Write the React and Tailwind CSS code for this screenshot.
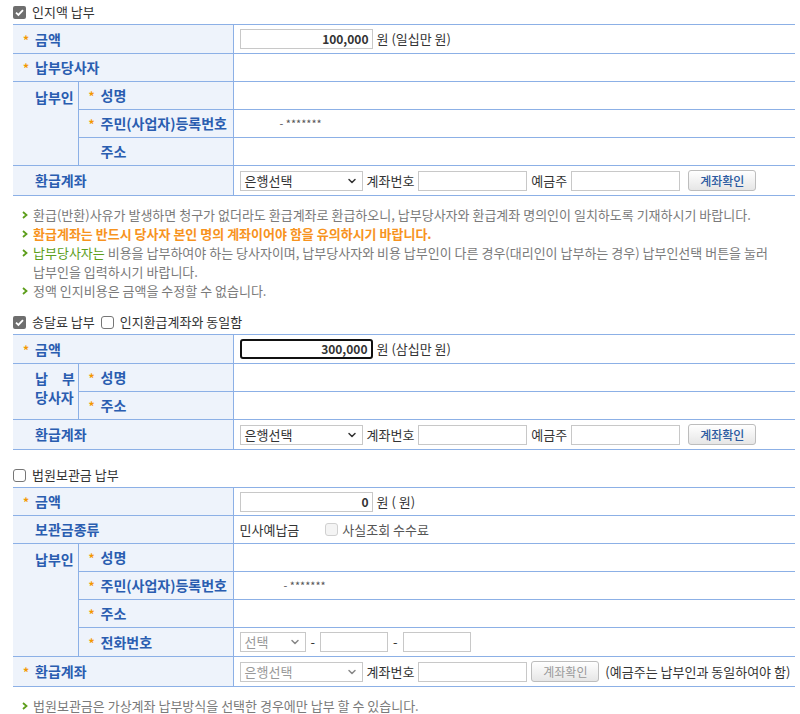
import React from "react";
import { ChevronDown } from "lucide-react";

const Star = () => <span className="inline-block w-[12px] text-[12px] text-[#f39800] font-bold">*</span>;
const NoStar = () => <span className="inline-block w-[12px]" />;

function CheckBox({ checked, disabled }) {
  if (checked) {
    return (
      <span className="inline-flex w-[13px] h-[13px] rounded-[2px] bg-[#6e6e6e] items-center justify-center">
        <svg viewBox="0 0 12 12" className="w-[11px] h-[11px]">
          <path d="M2.2 6.2 L4.8 8.7 L9.8 3.3" fill="none" stroke="white" strokeWidth="2" />
        </svg>
      </span>
    );
  }
  return (
    <span
      className={
        "inline-block w-[13px] h-[13px] rounded-[3px] border " +
        (disabled ? "border-[#d0d0d0] bg-[#f4f4f4]" : "border-[#767676] bg-white")
      }
    />
  );
}

function Header({ children }) {
  return <div className="h-[24px] flex items-center gap-[6px] text-[13px] text-[#333]">{children}</div>;
}

function LabelCell({ star, children, colSpan, rowSpan, sub, top }) {
  return (
    <td
      colSpan={colSpan}
      rowSpan={rowSpan}
      className={
        "bg-[#eef3fb] border-b border-[#8cb0e6] text-[14px] font-bold text-[#2a5db0] whitespace-nowrap " +
        (sub ? "pl-[10px] border-l " : "pl-[10px] ") +
        (top ? "align-top pt-[5px]" : "align-middle")
      }
    >
      {star ? <Star /> : <NoStar />}
      {children}
    </td>
  );
}

function ValueCell({ children }) {
  return (
    <td className="border-b border-l border-[#8cb0e6] pl-[6px] text-[13px] text-[#333] align-middle">
      <div className="flex items-center gap-[4px]">{children}</div>
    </td>
  );
}

function TextInput({ w, value, focused, bold }) {
  return (
    <div
      className={
        "h-[20px] flex items-center justify-end pr-[3px] bg-white text-[12px] " +
        (focused ? "border-2 border-[#111] rounded-[3px] " : "border border-[#c8c8c8] ") +
        (bold ? "font-bold text-[#333]" : "text-[#333]")
      }
      style={{ width: w }}
    >
      {value}
    </div>
  );
}

function Select({ w, label, disabled }) {
  return (
    <div
      className={
        "h-[20px] flex items-center justify-between px-[4px] border border-[#c8c8c8] bg-white text-[13px] " +
        (disabled ? "text-[#999]" : "text-[#333]")
      }
      style={{ width: w }}
    >
      <span>{label}</span>
      <ChevronDown size={12} strokeWidth={3} className={disabled ? "text-[#888]" : "text-[#333]"} />
    </div>
  );
}

function Btn({ disabled }) {
  return (
    <div
      className={
        "h-[21px] w-[68px] flex items-center justify-center rounded-[3px] border border-[#bdbdbd] bg-gradient-to-b from-white to-[#e6e6e6] text-[12px] " +
        (disabled ? "text-[#999]" : "text-[#2a5aa0] font-medium")
      }
    >
      계좌확인
    </div>
  );
}

function BankRow({ full }) {
  return (
    <>
      <Select w={123} label="은행선택" disabled={!full} />
      <span>계좌번호</span>
      <TextInput w={109} />
      {full ? (
        <>
          <span>예금주</span>
          <TextInput w={109} />
          <span className="ml-[4px]">
            <Btn />
          </span>
        </>
      ) : (
        <>
          <Btn disabled />
          <span className="ml-[2px]">(예금주는 납부인과 동일하여야 함)</span>
        </>
      )}
    </>
  );
}

const Arrow = ({ className = "" }) => (
  <svg viewBox="0 0 6 8" className={"w-[6px] h-[8px] shrink-0 " + className}>
    <path d="M1 1 L4.5 4 L1 7" fill="none" stroke="#5d9e1b" strokeWidth="1.8" />
  </svg>
);

function Note({ children }) {
  return (
    <div className="flex items-start gap-[5px] pl-[9px] leading-[19px] text-[13px] text-[#7a7a7a]">
      <Arrow className="mt-[6px]" />
      <div>{children}</div>
    </div>
  );
}

function Table({ children }) {
  return (
    <table className="w-full border-collapse border-t border-[#8cb0e6] table-fixed">
      <colgroup>
        <col className="w-[65px]" />
        <col className="w-[155px]" />
        <col />
      </colgroup>
      <tbody>{children}</tbody>
    </table>
  );
}

export default function App() {
  return (
    <div className="w-[800px] pl-[13px] pr-[5px] bg-white font-['Noto_Sans_CJK_KR','Liberation_Sans',sans-serif]">
      {/* 인지액 납부 */}
      <Header>
        <CheckBox checked />
        <span>인지액 납부</span>
      </Header>
      <Table>
        <tr className="h-[29px]">
          <LabelCell star colSpan={2}>금액</LabelCell>
          <ValueCell>
            <TextInput w={133} value="100,000" bold />
            <span>원 (일십만 원)</span>
          </ValueCell>
        </tr>
        <tr className="h-[28px]">
          <LabelCell star colSpan={2}>납부당사자</LabelCell>
          <ValueCell />
        </tr>
        <tr className="h-[28px]">
          <LabelCell rowSpan={3} top>납부인</LabelCell>
          <LabelCell star sub>성명</LabelCell>
          <ValueCell />
        </tr>
        <tr className="h-[28px]">
          <LabelCell star sub>주민(사업자)등록번호</LabelCell>
          <ValueCell>
            <span className="ml-[40px] text-[11px] text-[#555]">- *******</span>
          </ValueCell>
        </tr>
        <tr className="h-[28px]">
          <LabelCell sub>주소</LabelCell>
          <ValueCell />
        </tr>
        <tr className="h-[30px]">
          <LabelCell colSpan={2}>환급계좌</LabelCell>
          <ValueCell>
            <BankRow full />
          </ValueCell>
        </tr>
      </Table>

      <div className="mt-[9px] mb-[10px]">
        <Note>환급(반환)사유가 발생하면 청구가 없더라도 환급계좌로 환급하오니, 납부당사자와 환급계좌 명의인이 일치하도록 기재하시기 바랍니다.</Note>
        <Note>
          <span className="font-bold text-[#f7931e]">환급계좌는 반드시 당사자 본인 명의 계좌이어야 함을 유의하시기 바랍니다.</span>
        </Note>
        <Note>
          <span className="text-[#5d9e1b]">납부당사자는</span> 비용을 납부하여야 하는 당사자이며, 납부당사자와 비용 납부인이 다른 경우(대리인이 납부하는 경우) 납부인선택 버튼을 눌러
          <br />
          납부인을 입력하시기 바랍니다.
        </Note>
        <Note>정액 인지비용은 금액을 수정할 수 없습니다.</Note>
      </div>

      {/* 송달료 납부 */}
      <Header>
        <CheckBox checked />
        <span>송달료 납부</span>
        <CheckBox />
        <span>인지환급계좌와 동일함</span>
      </Header>
      <Table>
        <tr className="h-[29px]">
          <LabelCell star colSpan={2}>금액</LabelCell>
          <ValueCell>
            <TextInput w={133} value="300,000" bold focused />
            <span>원 (삼십만 원)</span>
          </ValueCell>
        </tr>
        <tr className="h-[28px]">
          <td rowSpan={2} className="bg-[#eef3fb] border-b border-[#8cb0e6] align-top pt-[5px] pl-[22px] text-[14px] font-bold text-[#2a5db0] leading-[19px]">
            <div className="flex justify-between w-[40px]">
              <span>납</span>
              <span>부</span>
            </div>
            <div>당사자</div>
          </td>
          <LabelCell star sub>성명</LabelCell>
          <ValueCell />
        </tr>
        <tr className="h-[28px]">
          <LabelCell star sub>주소</LabelCell>
          <ValueCell />
        </tr>
        <tr className="h-[30px]">
          <LabelCell colSpan={2}>환급계좌</LabelCell>
          <ValueCell>
            <BankRow full />
          </ValueCell>
        </tr>
      </Table>

      {/* 법원보관금 납부 */}
      <div className="mt-[13px]">
        <Header>
          <CheckBox />
          <span>법원보관금 납부</span>
        </Header>
      </div>
      <Table>
        <tr className="h-[28px]">
          <LabelCell star colSpan={2}>금액</LabelCell>
          <ValueCell>
            <TextInput w={133} value="0" bold />
            <span>원 ( 원)</span>
          </ValueCell>
        </tr>
        <tr className="h-[28px]">
          <LabelCell colSpan={2}>보관금종류</LabelCell>
          <ValueCell>
            <span>민사예납금</span>
            <span className="ml-[22px] flex items-center">
              <CheckBox disabled />
            </span>
            <span className="text-[#555]">사실조회 수수료</span>
          </ValueCell>
        </tr>
        <tr className="h-[28px]">
          <LabelCell rowSpan={4} top>납부인</LabelCell>
          <LabelCell star sub>성명</LabelCell>
          <ValueCell />
        </tr>
        <tr className="h-[28px]">
          <LabelCell star sub>주민(사업자)등록번호</LabelCell>
          <ValueCell>
            <span className="ml-[44px] text-[11px] text-[#555]">- *******</span>
          </ValueCell>
        </tr>
        <tr className="h-[28px]">
          <LabelCell star sub>주소</LabelCell>
          <ValueCell />
        </tr>
        <tr className="h-[29px]">
          <LabelCell star sub>전화번호</LabelCell>
          <ValueCell>
            <Select w={66} label="선택" disabled />
            <span className="mx-[1px]">-</span>
            <TextInput w={68} />
            <span className="mx-[1px]">-</span>
            <TextInput w={68} />
          </ValueCell>
        </tr>
        <tr className="h-[30px]">
          <LabelCell star colSpan={2}>환급계좌</LabelCell>
          <ValueCell>
            <BankRow />
          </ValueCell>
        </tr>
      </Table>
      <div className="mt-[9px] pb-[4px]">
        <Note>법원보관금은 가상계좌 납부방식을 선택한 경우에만 납부 할 수 있습니다.</Note>
      </div>
    </div>
  );
}
